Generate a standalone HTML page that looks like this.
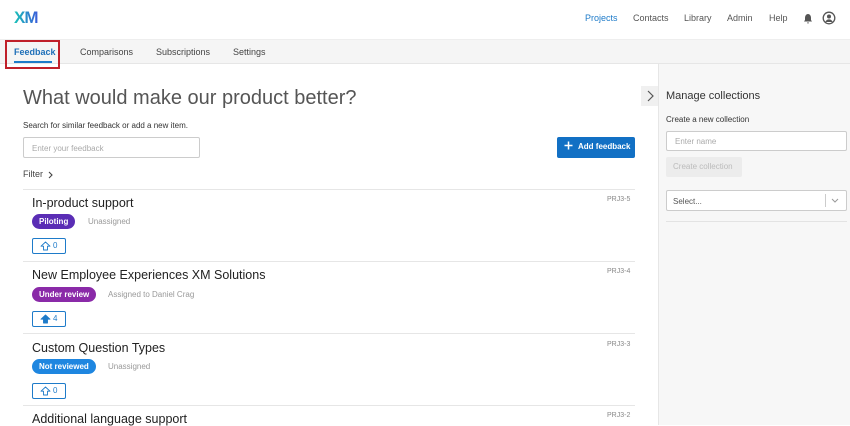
<!DOCTYPE html>
<html><head><meta charset="utf-8"><style>
*{box-sizing:border-box;margin:0;padding:0}
body{width:850px;height:425px;overflow:hidden;background:#fff;font-family:"Liberation Sans",sans-serif;position:relative;color:#333}
.a{position:absolute;white-space:nowrap}
.nav{font-size:9px;color:#555;top:13px}
.tab{font-size:9px;color:#444;top:47px}
.t{font-size:12.5px;color:#222}
.id{font-size:7px;color:#888}
.pill{height:15px;border-radius:8px;color:#fff;font-size:8px;font-weight:bold;line-height:15px;padding:0 7px}
.as{font-size:8px;color:#999}
.vote{width:34px;height:16px;border:1px solid #1e7bc9;border-radius:2px;font-size:8px;color:#1e7bc9;line-height:14px;padding-left:20px}
.vote svg{position:absolute;left:7px;top:2px}
.sep{height:1px;background:#e6e6e6;left:23px;width:612px}
</style></head><body>
<div class="a" style="left:14px;top:8px;font-size:17px;font-weight:bold;letter-spacing:-1px;background:linear-gradient(90deg,#19c3b7,#3b5bdb);-webkit-background-clip:text;color:transparent">XM</div>
<div class="a nav" style="left:585px;color:#1e7bc9">Projects</div>
<div class="a nav" style="left:633px">Contacts</div>
<div class="a nav" style="left:684px">Library</div>
<div class="a nav" style="left:727px">Admin</div>
<div class="a nav" style="left:769px">Help</div>
<svg class="a" style="left:803px;top:13px" width="10" height="11" viewBox="0 0 10 11"><path d="M5 1C3 1 2 3 2 5v2L1 8.5h8L8 7V5C8 3 7 1 5 1z M4 9.5h2a1 1 0 0 1-2 0z" fill="#555"/></svg>
<svg class="a" style="left:822px;top:11px" width="14" height="14" viewBox="0 0 14 14"><circle cx="7" cy="7" r="5.8" fill="none" stroke="#555" stroke-width="1.3"/><circle cx="7" cy="5.5" r="2" fill="#555"/><path d="M3.3 11c1-2 2.2-2.6 3.7-2.6s2.7.6 3.7 2.6" fill="#555"/></svg>
<div class="a" style="left:0;top:39px;width:850px;height:25px;background:#f5f5f5;border-top:1px solid #eee;border-bottom:1px solid #e6e6e6"></div>
<div class="a tab" style="left:14px;color:#1e6fb8;font-weight:bold">Feedback</div>
<div class="a" style="left:14px;top:61px;width:38px;height:2px;background:#1e7bc9"></div>
<div class="a" style="left:5px;top:40px;width:55px;height:29px;border:2px solid #c0202a"></div>
<div class="a tab" style="left:80px">Comparisons</div>
<div class="a tab" style="left:156px">Subscriptions</div>
<div class="a tab" style="left:233px">Settings</div>
<div class="a" style="left:658px;top:64px;width:192px;height:361px;background:#f7f7f7;border-left:1px solid #e6e6e6"></div>
<div class="a" style="left:641px;top:86px;width:17px;height:20px;background:#f0f0f0"></div>
<svg class="a" style="left:646px;top:90px" width="8" height="12" viewBox="0 0 8 12"><path d="M2 1l5 5-5 5" fill="none" stroke="#555" stroke-width="1.2"/></svg>
<div class="a" style="left:666px;top:90px;font-size:11px;color:#333">Manage collections</div>
<div class="a" style="left:666px;top:115px;font-size:8px;color:#333">Create a new collection</div>
<div class="a" style="left:666px;top:131px;width:181px;height:20px;background:#fff;border:1px solid #ccc;border-radius:2px;font-size:8px;color:#aaa;padding:5px 0 0 8px">Enter name</div>
<div class="a" style="left:666px;top:157px;width:76px;height:20px;background:#ececec;border-radius:2px;font-size:8px;color:#bbb;padding:5px 0 0 7px">Create collection</div>
<div class="a" style="left:666px;top:190px;width:181px;height:21px;background:#fff;border:1px solid #ccc;border-radius:2px;font-size:8px;color:#555;padding:6px 0 0 6px">Select...</div>
<div class="a" style="left:825px;top:194px;width:1px;height:13px;background:#ccc"></div>
<svg class="a" style="left:831px;top:198px" width="8" height="5" viewBox="0 0 8 5"><path d="M1 1l3 3 3-3" fill="none" stroke="#999"/></svg>
<div class="a" style="left:666px;top:221px;width:181px;height:1px;background:#e3e3e3"></div>
<div class="a" style="left:23px;top:87px;font-size:20px;color:#555">What would make our product better?</div>
<div class="a" style="left:23px;top:121px;font-size:8px;color:#333">Search for similar feedback or add a new item.</div>
<div class="a" style="left:23px;top:137px;width:177px;height:21px;border:1px solid #ccc;border-radius:2px;font-size:8px;color:#aaa;padding:6px 0 0 8px">Enter your feedback</div>
<div class="a" style="left:557px;top:137px;width:78px;height:21px;background:#1270c4;border-radius:2px;color:#fff;font-size:8px;font-weight:bold;padding:5px 0 0 21px">Add feedback</div>
<svg class="a" style="left:564px;top:141px" width="9" height="9" viewBox="0 0 9 9"><path d="M4.5 0.5v8M0.5 4.5h8" stroke="#fff" stroke-width="1.5"/></svg>
<div class="a" style="left:23px;top:169px;font-size:9px;color:#444">Filter</div>
<svg class="a" style="left:48px;top:171px" width="6" height="8" viewBox="0 0 6 8"><path d="M1 1l3 3-3 3" fill="none" stroke="#444" stroke-width="1.1"/></svg>
<div class="a sep" style="top:189px"></div>
<div class="a t" style="left:32px;top:196px">In-product support</div>
<div class="a id" style="left:607px;top:196px">PRJ3-5</div>
<div class="a pill" style="left:32px;top:214px;background:#5a2db5">Piloting</div>
<div class="a as" style="left:88px;top:217px">Unassigned</div>
<div class="a vote" style="left:32px;top:238px"><svg width="11" height="10" viewBox="0 0 11 10"><path d="M5.5 1L10 5.2H7.5V9h-4V5.2H1z" fill="none" stroke="#1e7bc9" stroke-width=".9" stroke-linejoin="round"/></svg>0</div>
<div class="a sep" style="top:261px"></div>
<div class="a t" style="left:32px;top:268px">New Employee Experiences XM Solutions</div>
<div class="a id" style="left:607px;top:268px">PRJ3-4</div>
<div class="a pill" style="left:32px;top:287px;background:#8a2aa8">Under review</div>
<div class="a as" style="left:108px;top:290px">Assigned to Daniel Crag</div>
<div class="a vote" style="left:32px;top:311px"><svg width="11" height="10" viewBox="0 0 11 10"><path d="M5.5 1L10 5.2H7.5V9h-4V5.2H1z" fill="#1e7bc9" stroke="#1e7bc9" stroke-width=".9" stroke-linejoin="round"/></svg>4</div>
<div class="a sep" style="top:333px"></div>
<div class="a t" style="left:32px;top:341px">Custom Question Types</div>
<div class="a id" style="left:607px;top:341px">PRJ3-3</div>
<div class="a pill" style="left:32px;top:359px;background:#1e86e0">Not reviewed</div>
<div class="a as" style="left:108px;top:362px">Unassigned</div>
<div class="a vote" style="left:32px;top:383px"><svg width="11" height="10" viewBox="0 0 11 10"><path d="M5.5 1L10 5.2H7.5V9h-4V5.2H1z" fill="none" stroke="#1e7bc9" stroke-width=".9" stroke-linejoin="round"/></svg>0</div>
<div class="a sep" style="top:405px"></div>
<div class="a t" style="left:32px;top:412px">Additional language support</div>
<div class="a id" style="left:607px;top:412px">PRJ3-2</div>
</body></html>
